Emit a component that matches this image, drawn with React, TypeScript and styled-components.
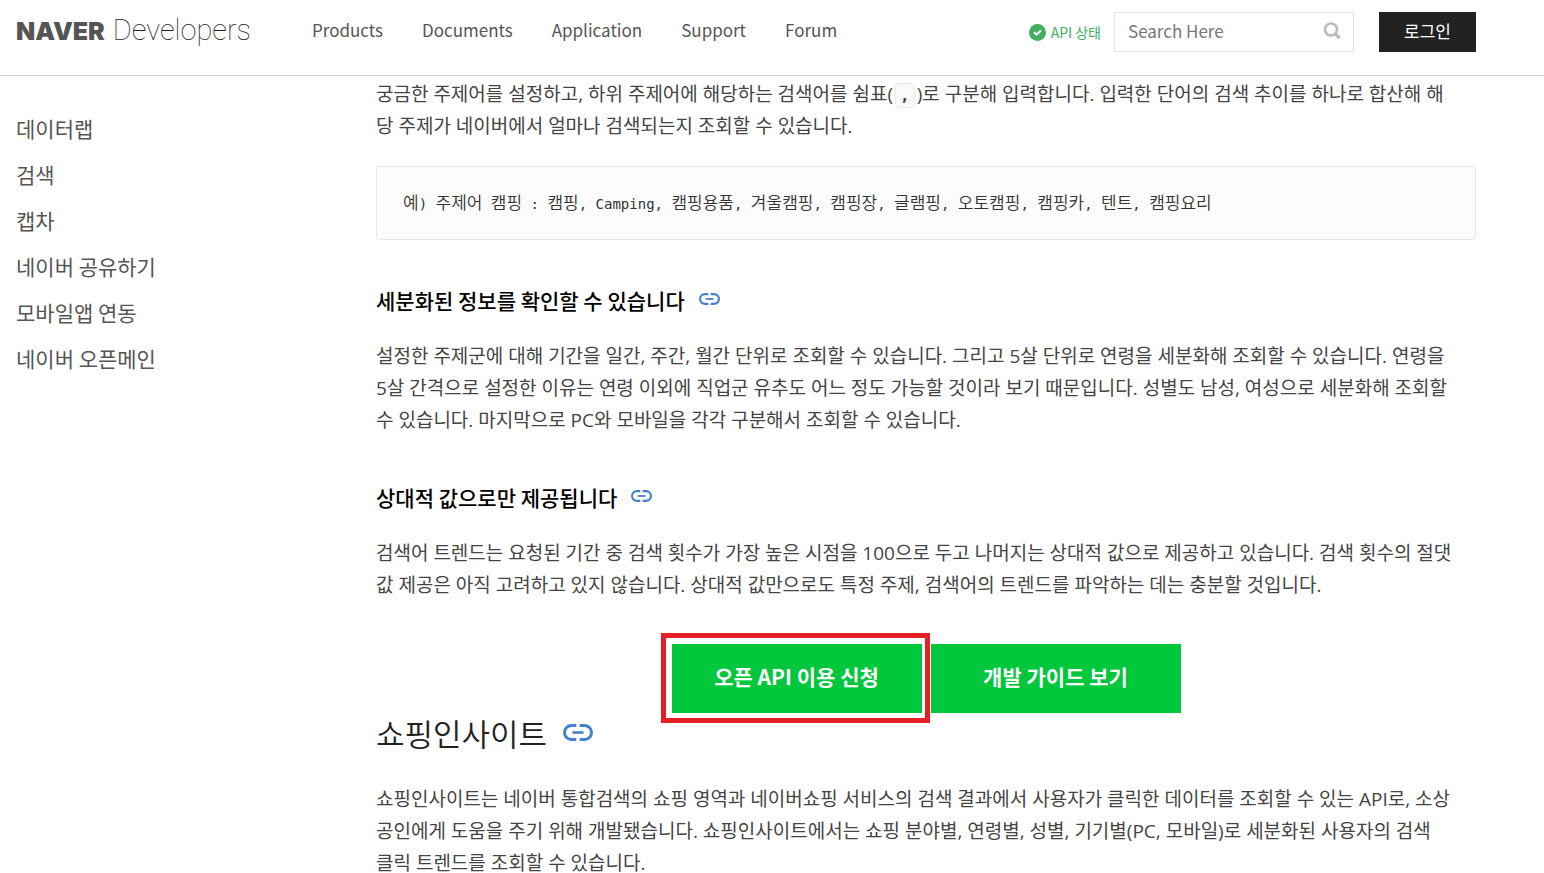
import React from "react";
import styled, { createGlobalStyle } from "styled-components";

const sans = `"Open Sans", "Noto Sans CJK KR", sans-serif`;
const korean = `"Noto Sans CJK KR", sans-serif`;

const GlobalStyle = createGlobalStyle`
  *, *::before, *::after { box-sizing: border-box; }
  body {
    margin: 0;
    background: #fff;
    color: #444;
    font-family: ${korean};
  }
  a { color: inherit; text-decoration: none; }
`;

const Header = styled.header`
  display: flex;
  align-items: flex-start;
  height: 76px;
  padding: 12px 68px 0 16px;
  border-bottom: 1px solid #d5d5d5;
`;

const Logo = styled.a`
  display: flex;
  align-items: baseline;
  gap: 8px;
  width: 296px;
  color: #555;
  line-height: 36px;
  white-space: nowrap;
`;

const Brand = styled.span`
  font-family: Inter, sans-serif;
  font-size: 25px;
  font-weight: 900;
`;

const Product = styled.span`
  color: #222;
  font-family: Roboto, sans-serif;
  font-size: 29px;
  font-weight: 100;
`;

const Nav = styled.nav`
  display: flex;
  gap: 39px;
  color: #555;
  font-size: 17px;
  line-height: 36px;
`;

const Tools = styled.div`
  display: flex;
  align-items: center;
  height: 40px;
  margin-left: auto;
`;

const Status = styled.a`
  display: flex;
  align-items: center;
  gap: 5px;
  margin-right: 13px;
  color: #41ae61;
  font-size: 14px;
  line-height: 20px;
  white-space: nowrap;
`;

const SearchBox = styled.form`
  display: flex;
  align-items: center;
  width: 240px;
  height: 40px;
  margin-right: 25px;
  padding: 0 12px 3px 13px;
  border: 1px solid #e5e5e5;
`;

const SearchInput = styled.input`
  flex: 1;
  min-width: 0;
  padding: 0;
  border: 0;
  outline: 0;
  background: transparent;
  color: #444;
  font-family: ${korean};
  font-size: 17px;
  &::placeholder { color: #777; opacity: 1; }
`;

const IconButton = styled.button`
  display: flex;
  padding: 0;
  border: 0;
  background: none;
`;

const LoginButton = styled.button`
  width: 97px;
  height: 40px;
  padding: 0 0 4px;
  border: 0;
  background: #222;
  color: #fff;
  font-family: ${korean};
  font-size: 17px;
`;

const Body = styled.div`
  display: flex;
`;

const Sidebar = styled.aside`
  flex: 0 0 376px;
  padding: 29px 16px 0;
`;

const SideList = styled.ul`
  margin: 0;
  padding: 0;
  list-style: none;
`;

const SideItem = styled.li`
  color: #555;
  font-size: 21px;
  line-height: 46px;
`;

const Content = styled.main`
  flex: 1;
  min-width: 0;
  padding: 2px 68px 0 0;
`;

const Text = styled.p`
  margin: 0;
  font-family: ${sans};
  font-size: 19px;
  line-height: 32px;
`;

const InlineCode = styled.code`
  margin: 0 2px;
  padding: 2px 4px;
  border: 1px solid #eaeaea;
  border-radius: 4px;
  background: #fafafa;
  font-family: "DejaVu Sans Mono", monospace;
  font-size: 16px;
  font-weight: 700;
  line-height: 16px;
`;

const CodeBlock = styled.pre`
  margin: 24px 0 43px;
  padding: 24px 26px 22px;
  border: 1px solid #e5e5e5;
  border-radius: 3px;
  background: #fcfcfc;
  color: #333;
  line-height: 24px;
`;

const CodeRun = styled.span<{ $korean: boolean }>`
  font-family: "DejaVu Sans Mono", "Noto Sans CJK KR", monospace;
  font-size: ${(p) => (p.$korean ? 17 : 14)}px;
  font-weight: ${(p) => (p.$korean ? 350 : 400)};
`;

const SubTitle = styled.h3`
  display: flex;
  align-items: center;
  gap: 14px;
  margin: 0 0 23px;
  color: #000;
  font-size: 21px;
  font-weight: 500;
  line-height: 34px;
`;

const Title = styled.h2`
  display: flex;
  align-items: center;
  gap: 16px;
  margin: 0 0 30px;
  color: #222;
  font-size: 31px;
  font-weight: 350;
  line-height: 40px;
`;

const Anchor = styled.a`
  display: flex;
  padding-bottom: 2px;
  color: #4480cd;
`;

const Section = styled.section`
  & + & { margin-top: 44px; }
`;

const Actions = styled.div`
  display: flex;
  justify-content: center;
  gap: 9px;
  margin-top: 43px;
`;

const Action = styled.button`
  position: relative;
  width: 250px;
  height: 69px;
  padding: 0 0 5px;
  border: 0;
  background: #00c73c;
  color: #fff;
  font-family: ${korean};
  font-size: 21px;
  font-weight: 700;
`;

const Highlight = styled.span`
  position: absolute;
  inset: -11px -8px -10px -11px;
  border: 5px solid #e41f26;
  pointer-events: none;
`;

const LinkIcon = ({ width, height }: { width: number; height: number }) => (
  <svg width={width} height={height} viewBox="0 0 30 17" fill="none" stroke="currentColor" aria-hidden="true">
    <path d="M13.3 1.5H8.5a7 7 0 0 0 0 14h4.8M16.7 1.5h4.8a7 7 0 0 1 0 14h-4.8" strokeWidth="3" />
    <path d="M9.5 8.5h11" strokeWidth="2.6" />
  </svg>
);

const CheckIcon = () => (
  <svg width="17" height="17" viewBox="0 0 17 17" aria-hidden="true">
    <circle cx="8.5" cy="8.5" r="8.5" fill="#41ae61" />
    <path d="M5 8.2l2.6 2.5 4.4-4.2" fill="none" stroke="#fff" strokeWidth="2" />
  </svg>
);

const SearchIcon = () => (
  <svg width="18" height="18" viewBox="0 0 18 18" fill="none" stroke="#bbb" aria-hidden="true">
    <circle cx="8" cy="7.5" r="6" strokeWidth="2.6" />
    <path d="M12.4 11.9L16.8 16" strokeWidth="3.2" />
  </svg>
);

const menu = ["Products", "Documents", "Application", "Support", "Forum"];
const side = ["데이터랩", "검색", "캡차", "네이버 공유하기", "모바일앱 연동", "네이버 오픈메인"];
const example =
  "예) 주제어 캠핑 : 캠핑, Camping, 캠핑용품, 겨울캠핑, 캠핑장, 글램핑, 오토캠핑, 캠핑카, 텐트, 캠핑요리";

export default function App() {
  return (
    <>
      <GlobalStyle />
      <Header>
        <Logo href="#">
          <Brand>NAVER</Brand>
          <Product>Developers</Product>
        </Logo>
        <Nav>
          {menu.map((m) => (
            <a href="#" key={m}>{m}</a>
          ))}
        </Nav>
        <Tools>
          <Status href="#">
            <CheckIcon />
            API 상태
          </Status>
          <SearchBox>
            <SearchInput type="text" placeholder="Search Here" aria-label="Search" />
            <IconButton type="button" aria-label="Search">
              <SearchIcon />
            </IconButton>
          </SearchBox>
          <LoginButton type="button">로그인</LoginButton>
        </Tools>
      </Header>
      <Body>
        <Sidebar>
          <SideList>
            {side.map((s) => (
              <SideItem key={s}><a href="#">{s}</a></SideItem>
            ))}
          </SideList>
        </Sidebar>
        <Content>
          <Text>
            궁금한 주제어를 설정하고, 하위 주제어에 해당하는 검색어를 쉼표(<InlineCode>,</InlineCode>)로 구분해 입력합니다. 입력한 단어의 검색 추이를 하나로 합산해 해<br />당 주제가 네이버에서 얼마나 검색되는지 조회할 수 있습니다.
          </Text>
          <CodeBlock>
            <code>
              {example.split(/([가-힣]+)/).filter(Boolean).map((run, i) => (
                <CodeRun key={i} $korean={/[가-힣]/.test(run)}>{run}</CodeRun>
              ))}
            </code>
          </CodeBlock>
          <Section>
            <SubTitle>
              세분화된 정보를 확인할 수 있습니다
              <Anchor href="#" aria-label="링크"><LinkIcon width={21} height={12} /></Anchor>
            </SubTitle>
            <Text>
              설정한 주제군에 대해 기간을 일간, 주간, 월간 단위로 조회할 수 있습니다. 그리고 5살 단위로 연령을 세분화해 조회할 수 있습니다. 연령을<br />
              5살 간격으로 설정한 이유는 연령 이외에 직업군 유추도 어느 정도 가능할 것이라 보기 때문입니다. 성별도 남성, 여성으로 세분화해 조회할<br />
              수 있습니다. 마지막으로 PC와 모바일을 각각 구분해서 조회할 수 있습니다.
            </Text>
          </Section>
          <Section>
            <SubTitle>
              상대적 값으로만 제공됩니다
              <Anchor href="#" aria-label="링크"><LinkIcon width={21} height={12} /></Anchor>
            </SubTitle>
            <Text>
              검색어 트렌드는 요청된 기간 중 검색 횟수가 가장 높은 시점을 100으로 두고 나머지는 상대적 값으로 제공하고 있습니다. 검색 횟수의 절댓<br />값 제공은 아직 고려하고 있지 않습니다. 상대적 값만으로도 특정 주제, 검색어의 트렌드를 파악하는 데는 충분할 것입니다.
            </Text>
          </Section>
          <Actions>
            <Action type="button">
              오픈 API 이용 신청
              <Highlight />
            </Action>
            <Action type="button">개발 가이드 보기</Action>
          </Actions>
          <Title>
            쇼핑인사이트
            <Anchor href="#" aria-label="링크"><LinkIcon width={30} height={17} /></Anchor>
          </Title>
          <Text>
            쇼핑인사이트는 네이버 통합검색의 쇼핑 영역과 네이버쇼핑 서비스의 검색 결과에서 사용자가 클릭한 데이터를 조회할 수 있는 API로, 소상<br />공인에게 도움을 주기 위해 개발됐습니다. 쇼핑인사이트에서는 쇼핑 분야별, 연령별, 성별, 기기별(PC, 모바일)로 세분화된 사용자의 검색<br />
            클릭 트렌드를 조회할 수 있습니다.
          </Text>
        </Content>
      </Body>
    </>
  );
}
